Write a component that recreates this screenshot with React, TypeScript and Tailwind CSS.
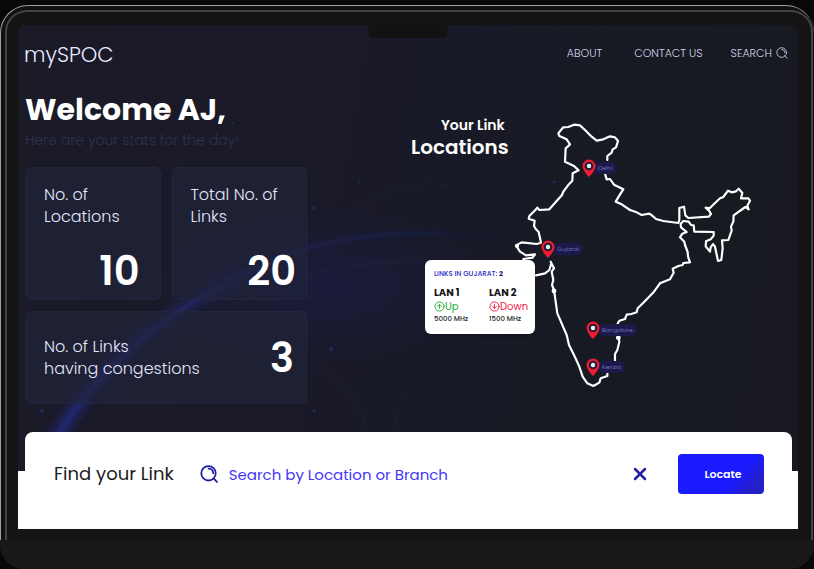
import { useState } from "react";
import { CircleArrowDown, CircleArrowUp, X } from "lucide-react";

interface Pin {
    name: string;
    position: string;
}

interface Link {
    name: string;
    up: boolean;
    speed: string;
}

const pins: Pin[] = [
    { name: "Delhi", position: "left-[72px] top-[44px]" },
    { name: "Gujarat", position: "left-[31px] top-[125px]" },
    { name: "Bangalore", position: "left-[76px] top-[206px]" },
    { name: "Kerala", position: "left-[76px] top-[243px]" },
];

const links: Link[] = [
    { name: "LAN 1", up: true, speed: "5000 MHz" },
    { name: "LAN 2", up: false, speed: "1500 MHz" },
];

const SearchIcon = ({ className }: { className: string }) => (
    <svg viewBox="0 0 18 18" fill="none" stroke="currentColor" strokeLinecap="round" className={className}>
        <circle cx="8.5" cy="8.3" r="7.2" />
        <path d="M13.6 13.4 17 17M8.6 3.6c2.7 0 4.6 2 4.6 4.7" />
    </svg>
);

const Backdrop = () => (
    <svg
        viewBox="0 0 780 504"
        preserveAspectRatio="none"
        className="absolute inset-0 h-full w-full"
        aria-hidden="true"
    >
        <defs>
            <filter id="soft" x="-20%" y="-20%" width="140%" height="140%">
                <feGaussianBlur stdDeviation="6" />
            </filter>
            <filter id="thin" x="-20%" y="-20%" width="140%" height="140%">
                <feGaussianBlur stdDeviation="2" />
            </filter>
            <linearGradient id="glow" x1="0" y1="0" x2="1" y2="0">
                <stop offset="0" stopColor="#2834b0" stopOpacity="0.5" />
                <stop offset="0.5" stopColor="#2834a0" stopOpacity="0.35" />
                <stop offset="1" stopColor="#2834a0" stopOpacity="0" />
            </linearGradient>
            <radialGradient id="haze">
                <stop offset="0" stopColor="#1d2468" stopOpacity="0.3" />
                <stop offset="1" stopColor="#1d2468" stopOpacity="0" />
            </radialGradient>
        </defs>
        <ellipse cx="310" cy="260" rx="190" ry="80" fill="url(#haze)" />
        <path
            d="M34 420C80 340 150 275 280 229"
            fill="none"
            stroke="url(#glow)"
            strokeWidth="13"
            filter="url(#soft)"
        />
        <path
            d="M34 420C80 340 170 262 290 223Q400 192 540 226"
            fill="none"
            stroke="url(#glow)"
            strokeWidth="3"
            filter="url(#thin)"
        />
        <path
            d="M310 206Q400 120 500 190M60 430C110 340 170 290 300 246Q400 226 520 250M282 342Q330 345 350 405M375 405Q380 370 400 355"
            fill="none"
            stroke="#4656b0"
            strokeOpacity="0.11"
        />
        <g fill="#3442b8" fillOpacity="0.4">
            <circle cx="24" cy="386" r="2" />
            <circle cx="296" cy="183" r="1.5" />
            <circle cx="341" cy="157" r="1" />
            <circle cx="160" cy="135" r="1" />
            <circle cx="215" cy="98" r="1" />
            <circle cx="536" cy="157" r="1.5" />
            <circle cx="313" cy="324" r="2" />
            <circle cx="296" cy="386" r="1.5" />
        </g>
    </svg>
);

const IndiaMap = () => (
    <svg
        viewBox="0 0 750 840"
        fill="none"
        stroke="white"
        strokeWidth="6.5"
        strokeLinejoin="round"
        strokeLinecap="round"
        className="h-full w-full"
        aria-hidden="true"
    >
        {/* North and west */}
        <g transform="translate(-30 -15)">
            <path d="M322 150 322 138 335 128 338 118 348 112 354 93 345 82 330 79 310 88 290 92 275 80 255 60 240 46 222 44 205 51 190 52 183 60 175 70 178 78 200 88 210 103 197 115 195 155 222 168 236 181 218 190 217 212 204 226 190 245 186 255 148 298 118 300 112 293 104 302 88 318 86 326 104 332 102 348 108 358 116 366 120 384 123 398 110 402 65 397 48 406 60 425 78 436 105 433 98 443 70 447" />
            <path d="M315 191 320 208 330 207 342 224 370 238 362 250 347 275 365 283 390 300" />
            <circle cx="51" cy="408" r="3" fill="white" />
        </g>
        {/* Northern border and the north-east */}
        <g transform="translate(330 -15)">
            <path d="M30 300 50 307 65 315 88 311 98 318 108 327 130 333 175 339 178 330 178 294 192 290 196 316 205 324 266 320 273 312 267 302 257 293 269 295 282 282 300 265 310 261 324 242 335 247 348 244 356 236 367 249 363 265 385 265 390 272 382 287 386 298 376 291 341 316 340 335 333 350 335 362 325 390 306 391 308 415 304 450 294 453 285 410 279 402 272 412 270 425 257 409 258 394 272 388 281 377 281 366 223 365 221 346 213 345 206 335 190 333 182 341 183 352 200 366 187 371 180 382 193 395 195 405 203 426 204 440 210 457 190 459 188 465 175 468 158 476 161 488 150 508 120 520" />
        </g>
        {/* Peninsula */}
        <g transform="translate(-30 345)">
            <path d="M480 160 462 185 430 218 413 235 410 247 394 252 380 254 375 267 358 272 352 283M355 320 358 335 352 360 345 372 345 392M322 430 322 438 302 445 298 458 280 468 262 460 248 440 238 410 222 375 207 345 200 315 185 280 172 250 167 215 162 180 156 165 160 150 155 125 162 115 152 95M154 100 148 120 135 130 108 136" />
            <circle cx="355" cy="323" r="4" fill="white" />
            <circle cx="162" cy="183" r="4" fill="white" />
        </g>
    </svg>
);

const MapPin = ({ name, position }: Pin) => (
    <div className={`absolute flex items-center ${position}`}>
        <svg viewBox="0 0 14 18" className="relative h-[18px] w-[14px]" aria-hidden="true">
            <path d="M7 .5A6.5 6.5 0 0 0 .5 7C.5 11.5 7 18 7 18s6.500-6.500 6.500-11A6.500 6.500 0 0 0 7 .5Z" fill="#f01c30" />
            <circle cx="7" cy="7" r="4.300" fill="#241b35" />
            <circle cx="7" cy="7" r="2.200" fill="#e4faff" />
        </svg>
        <span className="-ml-0.5 rounded-full bg-[#1b1a4b] pr-1 pl-1 text-[6px] leading-[12px] font-light text-[#8585ce]">
            {name}
        </span>
    </div>
);

const LinksPopup = () => (
    <div className="absolute top-[145px] left-3.5 w-[110px] rounded-md bg-white px-[9px] pt-2 pb-2.5 shadow-md">
        <p className="text-[7px] leading-[12px] font-medium text-[#2626c4]">
            LINKS IN GUJARAT: <b className="text-[#17178a]">2</b>
        </p>
        <div className="mt-1.5 flex gap-[15px]">
            {links.map((link) => (
                <div key={link.name} className="w-10 shrink-0 whitespace-nowrap">
                    <h3 className="text-[10px] leading-[14px] font-bold text-[#151515]">{link.name}</h3>
                    <p
                        className={`flex items-center text-[10px] leading-[13px] ${
                            link.up ? "text-[#18ae32]" : "text-[#f5143f]"
                        }`}
                    >
                        {link.up ? <CircleArrowUp size={11} /> : <CircleArrowDown size={11} />}
                        {link.up ? "Up" : "Down"}
                    </p>
                    <p className="text-[7px] leading-[11px] font-medium text-[#222222]">{link.speed}</p>
                </div>
            ))}
        </div>
    </div>
);

const cardStyle = "rounded-md border border-[#282a45]/60 bg-[#22243c]/60";
const labelStyle = "text-[16px] leading-[22px] font-light text-[#e4e4fa]";
const numberStyle = "text-[40px] leading-[44px] font-semibold";

const Stats = () => (
    <section className="w-[282px]">
        <h1 className="text-[30px] leading-[40px] font-bold whitespace-nowrap">Welcome AJ,</h1>
        <p className="text-[14px] leading-[20px] font-light text-[#30304f]">Here are your stats for the day!</p>
        <div className="mt-[17px] grid grid-cols-2 gap-[11px]">
            <article className={`${cardStyle} flex h-[133px] flex-col justify-between pt-4 pr-5 pb-1.5 pl-[18px]`}>
                <h2 className={labelStyle}>No. of Locations</h2>
                <p className={`${numberStyle} text-right`}>10</p>
            </article>
            <article className={`${cardStyle} flex h-[133px] flex-col justify-between pt-4 pr-2.5 pb-1.5 pl-[18px]`}>
                <h2 className={labelStyle}>Total No. of Links</h2>
                <p className={`${numberStyle} text-right`}>20</p>
            </article>
            <article className={`${cardStyle} col-span-2 flex h-[93px] items-center justify-between pr-3 pl-[18px]`}>
                <h2 className={labelStyle}>
                    No. of Links
                    <br />
                    having congestions
                </h2>
                <p className={numberStyle}>3</p>
            </article>
        </div>
    </section>
);

const SearchBar = () => {
    const [query, setQuery] = useState("");

    return (
        <div className="relative bg-[linear-gradient(to_bottom,transparent_39px,white_39px)] pr-1.5 pl-[7px]">
            <form
                onSubmit={(e) => e.preventDefault()}
                className="flex h-[97px] items-start rounded-t-lg bg-white pt-[22px] pr-7 pl-[29px]"
            >
                <label htmlFor="query" className="text-[18px] leading-[40px] whitespace-nowrap text-[#1a1a1a]">
                    Find your Link
                </label>
                <SearchIcon className="mt-[11px] ml-[26px] h-[18px] w-[18px] shrink-0 stroke-[1.800] text-[#2020a0]" />
                <input
                    id="query"
                    value={query}
                    onChange={(e) => setQuery(e.target.value)}
                    placeholder="Search by Location or Branch"
                    className="ml-[11px] h-10 min-w-0 flex-1 bg-transparent text-[15px] text-[#4438f4] outline-none placeholder:text-[#4438f4]"
                />
                <button
                    type="button"
                    aria-label="Clear search"
                    onClick={() => setQuery("")}
                    className="flex h-10 w-6 items-center justify-center text-[#2020a0]"
                >
                    <X size={20} strokeWidth={3} />
                </button>
                <button
                    type="submit"
                    className="ml-[26px] h-10 w-[86px] rounded bg-[linear-gradient(135deg,#1a1aff_65%,#2520c8_85%)] pl-1 text-[11px] font-semibold text-white"
                >
                    Locate
                </button>
            </form>
        </div>
    );
};

export default function App() {
    return (
        <div className="min-h-screen bg-[#080808] pt-[5px] font-[Poppins,Inter,sans-serif] text-white">
            <div className="rounded-t-[28px] border-t border-l border-[#a0a0a0] bg-[#111111] pt-1 pr-px pl-1">
                <div className="rounded-t-[22px] border-x-2 border-t-2 border-[#444444] bg-[#141414] pt-[13px] pr-[13px] pb-[11px] pl-[11px]">
                    <div className="relative overflow-hidden rounded-t-lg bg-[linear-gradient(100deg,#1b1a27,#191928_45%,#171a22_75%,#191921)]">
                        <Backdrop />
                        <div className="absolute top-0 left-1/2 h-[13px] w-[79px] -translate-x-1/2 rounded-b-sm bg-[#121212]" />
                        <header className="relative flex h-14 items-center justify-between pr-2.5 pl-1.5">
                            <a href="#home" className="pt-0.5 text-[21px] leading-none font-light text-[#e8e8ff]">
                                mySPOC
                            </a>
                            <nav className="flex items-center text-[11px] font-light text-[#d4d4ee]">
                                <a href="#about">ABOUT</a>
                                <a href="#contact" className="ml-8">CONTACT US</a>
                                <a href="#search" className="ml-7 flex items-center gap-1">
                                    SEARCH
                                    <SearchIcon className="h-3 w-3 stroke-[1.300]" />
                                </a>
                            </nav>
                        </header>
                        <main className="relative flex justify-between pt-[9px] pr-[38px] pb-7 pl-[7px]">
                            <Stats />
                            <section className="relative mt-[25px] flex h-[280px] w-[349px] justify-between">
                                <h2 className="text-right font-semibold whitespace-nowrap">
                                    <span className="block pr-1 text-[14px] leading-[20px]">Your Link</span>
                                    <span className="block text-[20px] leading-[24px]">Locations</span>
                                </h2>
                                <div className="relative h-[280px] w-[250px] shrink-0">
                                    <IndiaMap />
                                    {pins.map((pin) => (
                                        <MapPin key={pin.name} {...pin} />
                                    ))}
                                </div>
                                <LinksPopup />
                            </section>
                        </main>
                        <SearchBar />
                    </div>
                </div>
            </div>
            <footer className="h-[29px] rounded-b-3xl bg-[#181818]" />
        </div>
    );
}
